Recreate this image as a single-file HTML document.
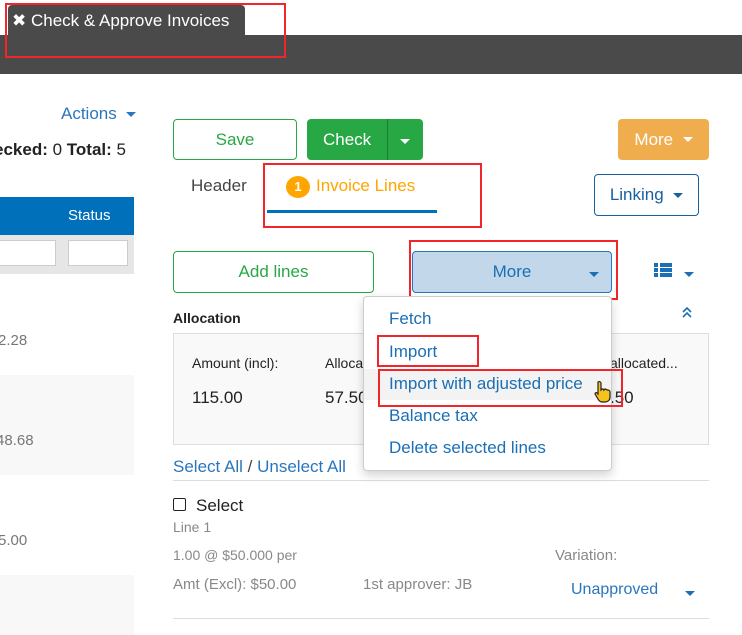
<!DOCTYPE html>
<html><head><meta charset="utf-8"><style>
*{box-sizing:border-box;margin:0;padding:0}
body{width:742px;height:635px;overflow:hidden;background:#fff;font-family:"Liberation Sans",Arial,sans-serif;position:relative;color:#222}
.a{position:absolute;white-space:nowrap}
.red{position:absolute;border:2px solid #f0262c}
.caret{display:inline-block;width:0;height:0;border-left:5px solid transparent;border-right:5px solid transparent;border-top:5px solid currentColor;vertical-align:middle}
.btn{position:absolute;border-radius:4px;display:flex;align-items:center;justify-content:center;font-size:17px}
.dd div{position:absolute;left:25px;font-size:17px;color:#1a6fb5}
</style></head><body>
<div class="a" style="left:0;top:35px;width:742px;height:39px;background:#4a4a4a"></div>
<div class="a" style="left:8px;top:5px;width:237px;height:31px;background:#4a4a4a;border-radius:4px 4px 0 0"></div>
<div class="a" style="left:12px;top:11px;color:#fff;font-size:17px">✖ Check &amp; Approve Invoices</div>
<div class="red" style="left:5px;top:3px;width:281px;height:55px"></div>

<div class="a" style="left:61px;top:104px;color:#2a76bd;font-size:17px">Actions &nbsp;<span class="caret"></span></div>
<div class="a" style="left:-6px;top:140px;font-size:17px"><b>ecked:</b> 0 <b>Total:</b> 5</div>
<div class="a" style="left:0;top:197px;width:134px;height:38px;background:#0070ba"></div>
<div class="a" style="left:68px;top:207px;color:#fff;font-size:15px">Status</div>
<div class="a" style="left:0;top:235px;width:134px;height:39px;background:#e6e6e6"></div>
<div class="a" style="left:-2px;top:240px;width:58px;height:26px;background:#fff;border:1px solid #ccc"></div>
<div class="a" style="left:68px;top:240px;width:60px;height:26px;background:#fff;border:1px solid #ccc"></div>
<div class="a" style="left:0;top:375px;width:134px;height:100px;background:#f8f8f8"></div>
<div class="a" style="left:0;top:575px;width:134px;height:60px;background:#f8f8f8"></div>
<div class="a" style="left:-2px;top:332px;color:#777;font-size:15px">2.28</div>
<div class="a" style="left:-4px;top:432px;color:#777;font-size:15px">48.68</div>
<div class="a" style="left:-2px;top:532px;color:#777;font-size:15px">5.00</div>

<div class="btn" style="left:173px;top:119px;width:124px;height:41px;border:1px solid #28a745;color:#28a745">Save</div>
<div class="btn" style="left:307px;top:119px;width:116px;height:41px;background:#28a745;color:#fff;justify-content:flex-start;padding-left:16px">Check</div>
<div class="a" style="left:387px;top:119px;width:1px;height:41px;background:#1e7e34"></div>
<div class="a" style="left:400px;top:133px;color:#fff"><span class="caret"></span></div>
<div class="btn" style="left:618px;top:119px;width:91px;height:41px;background:#f0ad4e;color:#fff">More &nbsp;<span class="caret"></span></div>

<div class="a" style="left:191px;top:176px;color:#444;font-size:17px">Header</div>
<div class="a" style="left:286px;top:176px;width:24px;height:22px;border-radius:50%;background:#ffa500;color:#fff;font-size:13px;font-weight:bold;text-align:center;line-height:22px">1</div>
<div class="a" style="left:316px;top:176px;color:#ffa500;font-size:17px">Invoice Lines</div>
<div class="a" style="left:267px;top:210px;width:170px;height:3px;background:#0070ba"></div>
<div class="red" style="left:263px;top:163px;width:219px;height:65px"></div>
<div class="btn" style="left:594px;top:174px;width:105px;height:42px;border:1px solid #1a5fa0;color:#1a5fa0">Linking &nbsp;<span class="caret"></span></div>

<div class="btn" style="left:173px;top:251px;width:201px;height:42px;border:1px solid #28a745;color:#28a745">Add lines</div>
<div class="btn" style="left:412px;top:251px;width:200px;height:42px;background:#c2d7ea;border:1px solid #2a76bd;color:#1a6fb5">More</div>
<div class="a" style="left:589px;top:266px;color:#1a6fb5"><span class="caret"></span></div>
<div class="red" style="left:409px;top:240px;width:209px;height:60px"></div>
<svg class="a" style="left:654px;top:262px" width="18" height="16"><g fill="#1a6fb5"><rect x="0" y="1" width="4" height="4"/><rect x="6" y="1" width="12" height="4"/><rect x="0" y="6" width="4" height="4"/><rect x="6" y="6" width="12" height="4"/><rect x="0" y="11" width="4" height="4"/><rect x="6" y="11" width="12" height="4"/></g></svg>
<div class="a" style="left:684px;top:266px;color:#1a6fb5"><span class="caret"></span></div>

<div class="a" style="left:173px;top:310px;font-weight:bold;font-size:14px">Allocation</div>
<svg class="a" style="left:681px;top:306px" width="12" height="12"><path d="M2 6l4-4 4 4M2 11l4-4 4 4" stroke="#1a6fb5" stroke-width="1.6" fill="none"/></svg>
<div class="a" style="left:173px;top:333px;width:536px;height:112px;background:#f9f9f9;border:1px solid #ddd"></div>
<div class="a" style="left:192px;top:355px;font-size:14px">Amount (incl):</div>
<div class="a" style="left:192px;top:388px;font-size:17px">115.00</div>
<div class="a" style="left:325px;top:355px;font-size:14px">Alloca</div>
<div class="a" style="left:325px;top:388px;font-size:17px">57.50</div>
<div class="a" style="left:610px;top:355px;font-size:14px">allocated...</div>
<div class="a" style="left:610px;top:388px;font-size:17px">.50</div>

<div class="a" style="left:173px;top:457px;color:#2a76bd;font-size:17px">Select All <span style="color:#444">/</span> Unselect All</div>
<div class="a" style="left:173px;top:480px;width:536px;height:1px;background:#ddd"></div>
<div class="a" style="left:173px;top:498px;width:13px;height:13px;border:1.5px solid #222;border-radius:2px"></div>
<div class="a" style="left:196px;top:496px;font-size:17px">Select</div>
<div class="a" style="left:173px;top:519px;color:#888;font-size:14px">Line 1</div>
<div class="a" style="left:173px;top:547px;color:#888;font-size:14px">1.00 @ $50.000 per</div>
<div class="a" style="left:555px;top:547px;color:#888;font-size:15px">Variation:</div>
<div class="a" style="left:173px;top:576px;color:#888;font-size:15px">Amt (Excl): $50.00</div>
<div class="a" style="left:363px;top:576px;color:#888;font-size:15px">1st approver: JB</div>
<div class="a" style="left:571px;top:581px;color:#2a76bd;font-size:16px">Unapproved</div>
<div class="a" style="left:685px;top:585px;color:#1a6fb5"><span class="caret"></span></div>
<div class="a" style="left:173px;top:618px;width:536px;height:1px;background:#ddd"></div>

<div class="a dd" style="left:363px;top:296px;width:249px;height:175px;background:#fff;border:1px solid #ccc;border-radius:4px;box-shadow:0 4px 10px rgba(0,0,0,.18)">
<div style="left:0;width:247px;top:72px;height:31px;background:#f3f3f3"></div>
<div style="top:12px">Fetch</div>
<div style="top:45px">Import</div>
<div style="top:77px">Import with adjusted price</div>
<div style="top:109px">Balance tax</div>
<div style="top:141px">Delete selected lines</div>
</div>
<div class="red" style="left:377px;top:335px;width:102px;height:32px"></div>
<div class="red" style="left:378px;top:369px;width:245px;height:38px"></div>
<svg class="a" style="left:592px;top:380px" width="20" height="24"><path d="M6 2c1-1 3 0 3 1v7l1-1c1 0 2 0 2 1l1-1c1 0 2 1 2 1l1 0c1 0 2 1 2 2v5c0 3-2 5-5 5h-3c-2 0-3-1-4-3l-3-5c0-1 1-2 2-1l1 1V3z" fill="#f6c21c" stroke="#222" stroke-width="1.2"/></svg>
</body></html>
